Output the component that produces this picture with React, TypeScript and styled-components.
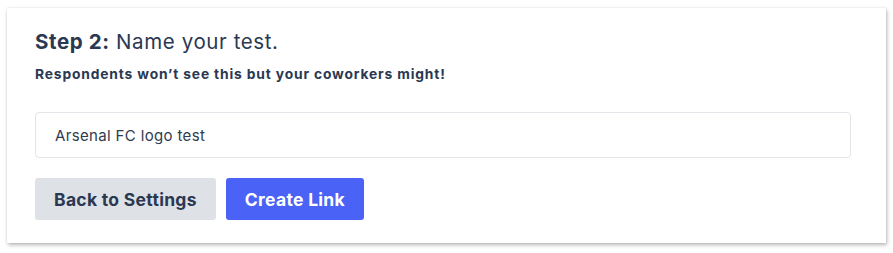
import styled, { createGlobalStyle } from "styled-components";

const GlobalStyle = createGlobalStyle`
  body {
    margin: 0;
    background: #ffffff;
    font-family: "Inter", "Lato", sans-serif;
    color: #2a3852;
  }
`;

const Page = styled.div`
  padding: 8px 7px 10px 7px;
`;

const Card = styled.section`
  background: #ffffff;
  box-shadow: 1px 2px 4px rgba(0, 0, 0, 0.28), 0 0 2px rgba(0, 0, 0, 0.08);
  padding: 21px 35px 23px 28px;
  display: flex;
  flex-direction: column;
`;

const Title = styled.h2`
  margin: 0;
  font-size: 20.5px;
  line-height: 26px;
  font-weight: 400;
  letter-spacing: 0.6px;
  color: #2a3852;

  strong {
    font-weight: 700;
  }
`;

const Subtitle = styled.p`
  margin: 10px 0 0 0;
  font-size: 13.8px;
  line-height: 18px;
  font-weight: 700;
  letter-spacing: 0.85px;
  color: #2a3852;
`;

const NameInput = styled.input`
  margin-top: 29px;
  height: 46px;
  box-sizing: border-box;
  border: 1px solid #e2e5ea;
  border-radius: 4px;
  padding: 0 19px;
  font-family: inherit;
  font-size: 15px;
  letter-spacing: 0.35px;
  color: #2f3b50;
  outline: none;
`;

const Actions = styled.div`
  display: flex;
  gap: 10px;
  margin-top: 20px;
`;

const Button = styled.button<{ $primary?: boolean }>`
  height: 42px;
  border: none;
  border-radius: 3px;
  padding: 0 19px;
  font-family: inherit;
  font-size: 17.5px;
  font-weight: 700;
  letter-spacing: 0.3px;
  cursor: pointer;
  background: ${(p) => (p.$primary ? "#4a62f5" : "#dee1e6")};
  color: ${(p) => (p.$primary ? "#ffffff" : "#2a3852")};
`;

export default function App() {
  return (
    <>
      <GlobalStyle />
      <Page>
        <Card>
          <Title>
            <strong>Step 2:</strong> Name your test.
          </Title>
          <Subtitle>Respondents won’t see this but your coworkers might!</Subtitle>
          <NameInput defaultValue="Arsenal FC logo test" />
          <Actions>
            <Button>Back to Settings</Button>
            <Button $primary>Create Link</Button>
          </Actions>
        </Card>
      </Page>
    </>
  );
}
